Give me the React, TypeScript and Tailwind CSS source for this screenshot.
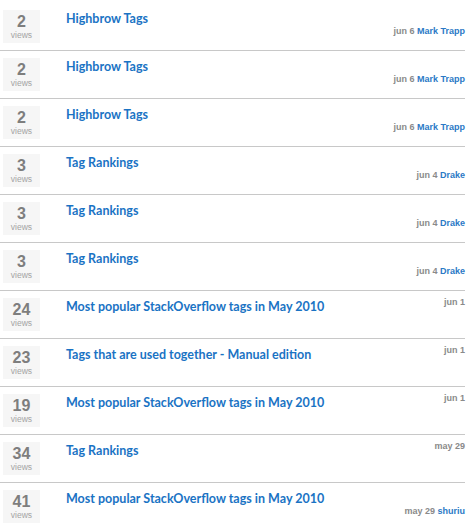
const rows = [
  { views: 2, title: "Highbrow Tags", date: "jun 6", user: "Mark Trapp" },
  { views: 2, title: "Highbrow Tags", date: "jun 6", user: "Mark Trapp" },
  { views: 2, title: "Highbrow Tags", date: "jun 6", user: "Mark Trapp" },
  { views: 3, title: "Tag Rankings", date: "jun 4", user: "Drake" },
  { views: 3, title: "Tag Rankings", date: "jun 4", user: "Drake" },
  { views: 3, title: "Tag Rankings", date: "jun 4", user: "Drake" },
  { views: 24, title: "Most popular StackOverflow tags in May 2010", date: "jun 1", user: "" },
  { views: 23, title: "Tags that are used together - Manual edition", date: "jun 1", user: "" },
  { views: 19, title: "Most popular StackOverflow tags in May 2010", date: "jun 1", user: "" },
  { views: 34, title: "Tag Rankings", date: "may 29", user: "" },
  { views: 41, title: "Most popular StackOverflow tags in May 2010", date: "may 29", user: "shuriu" },
];

export default function App() {
  return (
    <div className="w-[474px] h-[526px] overflow-hidden bg-white pt-[3px]">
      <div className="w-[465px]">
        {rows.map((r, i) => (
          <div key={i} className="flex h-[48px] border-b border-[#c8c8c8]">
            {/* view count */}
            <div className="ml-[3px] mt-[7px] w-[37px] h-[33px] bg-[#f6f6f6] flex flex-col items-center font-['Liberation_Sans',Arial,sans-serif]">
              <span className="text-[16px] leading-[16px] font-bold text-[#7e7e7e] mt-[4px]">{r.views}</span>
              <span className="text-[8.5px] leading-[10px] text-[#a4a4a4]">views</span>
            </div>
            <div className="flex-1 pl-[26px] pt-[2px]">
              <a className="text-[12.5px] leading-[16px] font-bold text-[#1a73c4] font-['Lato',sans-serif]">
                {r.title}
              </a>
            </div>
            <div
              className={
                "text-[9px] leading-[11px] font-bold font-['Liberation_Sans',Arial,sans-serif] whitespace-nowrap " +
                (r.user ? "pt-[23px]" : "pt-[6px]")
              }
            >
              <span className="text-[#8a8a8a]">{r.date}</span>
              {r.user && <span className="text-[#2b79c6]"> {r.user}</span>}
            </div>
          </div>
        ))}
      </div>
    </div>
  );
}
